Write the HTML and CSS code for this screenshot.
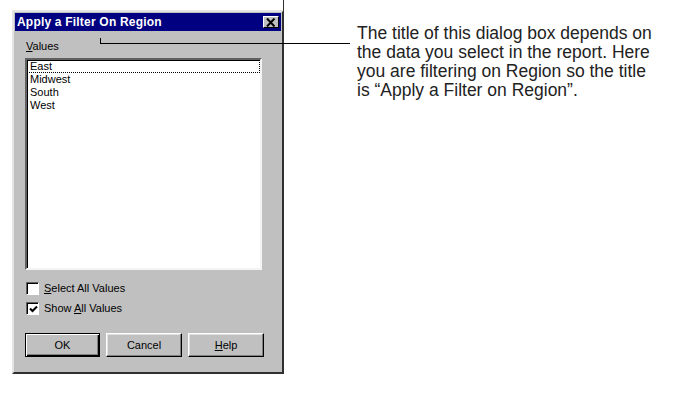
FILE: index.html
```html
<!DOCTYPE html>
<html>
<head>
<meta charset="utf-8">
<link rel="stylesheet" href="styles.css">
</head>
<body>
<div class="page">
  <div class="dialog">
    <div class="titlebar">
      <span class="title">Apply a Filter On Region</span>
      <span class="close"><svg width="10" height="9" viewBox="0 0 10 9"><path d="M1 0.5 L8.5 8.5 M8.5 0.5 L1 8.5" stroke="#000" stroke-width="2" fill="none"/></svg></span>
    </div>
    <div class="content">
      <div class="label"><u>V</u>alues</div>
      <div class="listbox">
        <div class="item focus">East</div>
        <div class="item">Midwest</div>
        <div class="item">South</div>
        <div class="item">West</div>
      </div>
      <div class="checks">
        <div class="check"><span class="box"></span><span><u>S</u>elect All Values</span></div>
        <div class="check"><span class="box"><svg width="9" height="9" viewBox="0 0 9 9"><path d="M1 3.5 L3.5 6 L8 1.5" stroke="#000" stroke-width="2" fill="none"/></svg></span><span>Show <u>A</u>ll Values</span></div>
      </div>
      <div class="buttons">
        <div class="btn default"><span>OK</span></div>
        <div class="btn"><span>Cancel</span></div>
        <div class="btn"><span><u>H</u>elp</span></div>
      </div>
    </div>
  </div>
  <div class="note">The title of this dialog box depends on the data you select in the report. Here you are filtering on Region so the title is “Apply a Filter on Region”.</div>
  <div class="leader"></div>
</div>
</body>
</html>
```
FILE: styles.css
```css
html, body {
  margin: 0;
  padding: 0;
  background: #fff;
}
.page {
  position: relative;
  display: flex;
  align-items: flex-start;
  padding: 10px 0 0 12px;
  width: 699px;
  height: 420px;
  box-sizing: border-box;
  font-family: "Liberation Sans", Arial, sans-serif;
}
.dialog {
  position: relative;
  width: 272px;
  box-sizing: border-box;
  background: #c0c0c0;
  border: 2px solid;
  border-color: #e4e4e4 #303030 #303030 #e4e4e4;
  padding: 1px;
  font-size: 11px;
  color: #000;
}
.dialog::before {
  content: "";
  position: absolute;
  right: -2px;
  top: -12px;
  width: 1px;
  height: 12px;
  background: #303030;
}
.titlebar {
  height: 18px;
  background: #000080;
  display: flex;
  align-items: center;
  justify-content: space-between;
  padding: 0 2px 0 2px;
}
.title {
  color: #fff;
  font-weight: bold;
  font-size: 12px;
  letter-spacing: 0.2px;
}
.close {
  width: 16px;
  height: 12px;
  box-sizing: border-box;
  background: #c0c0c0;
  border: 1px solid;
  border-color: #fff #000 #000 #fff;
  display: flex;
  align-items: center;
  justify-content: center;
}
.content {
  padding: 9px 0 14px 10px;
}
.label {
  line-height: 13px;
  height: 13px;
  padding-left: 1px;
}
u {
  text-decoration: underline;
  text-underline-offset: 1px;
}
.listbox {
  margin-top: 5px;
  width: 237px;
  height: 212px;
  box-sizing: border-box;
  background: #fff;
  border: 2px solid;
  border-color: #606060 #f4f4f4 #f4f4f4 #606060;
  box-shadow: inset 1px 1px 0 #000;
  padding-top: 0;
}
.item {
  line-height: 13px;
  height: 13px;
  padding-left: 3px;
}
.item.focus {
  outline: 1px dotted #000;
  outline-offset: -1px;
  margin-right: 0;
}
.checks {
  margin-top: 12px;
  display: flex;
  flex-direction: column;
  gap: 7px;
}
.check {
  display: flex;
  align-items: center;
  gap: 5px;
  height: 13px;
  line-height: 13px;
  padding-left: 1px;
}
.box {
  width: 13px;
  height: 13px;
  box-sizing: border-box;
  background: #fff;
  border: 1px solid;
  border-color: #606060 #fff #fff #606060;
  box-shadow: inset 1px 1px 0 #000;
  display: flex;
  align-items: center;
  justify-content: center;
}
.box svg {
  margin: 1px 0 0 1px;
}
.buttons {
  margin-top: 18px;
  display: flex;
  gap: 6px;
}
.btn {
  width: 76px;
  height: 24px;
  box-sizing: border-box;
  border: 1px solid;
  border-color: #fff #000 #000 #fff;
  box-shadow: inset -1px -1px 0 #808080, inset 1px 1px 0 #e0e0e0;
  display: flex;
  align-items: center;
  justify-content: center;
  background: #c0c0c0;
}
.btn.default {
  width: 75px;
  border: 1px solid #000;
  box-shadow: inset 1px 1px 0 #fff, inset -1px -1px 0 #000, inset -2px -2px 0 #808080;
}
.note {
  margin-left: 73px;
  margin-top: 14px;
  width: 302px;
  font-size: 17.5px;
  line-height: 19px;
  color: #222;
}
.leader {
  position: absolute;
  left: 100px;
  top: 38px;
  width: 249px;
  height: 5px;
  border-left: 1px solid #000;
  border-bottom: 1px solid #000;
}
```
